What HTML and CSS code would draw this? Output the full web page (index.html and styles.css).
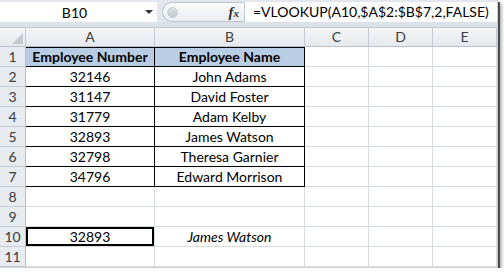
FILE: index.html
```html
<!DOCTYPE html>
<html lang="en">
<head>
  <meta charset="UTF-8">
  <title>VLOOKUP</title>
  <link rel="stylesheet" href="styles.css">
</head>
<body>
  <div class="window">
    <div class="toolbar">
      <div class="namebox">
        <span class="name">B10</span>
        <span class="arrow"></span>
      </div>
      <div class="pill">
        <span class="knob"></span>
        <span class="fx"><i>f</i><i class="x">x</i></span>
      </div>
      <div class="formula">=VLOOKUP(A10,$A$2:$B$7,2,FALSE)</div>
    </div>
    <div class="band"></div>

    <table class="sheet">
      <colgroup>
        <col style="width: 26px">
        <col style="width: 129px">
        <col style="width: 150px">
        <col style="width: 64px">
        <col style="width: 64px">
        <col style="width: 64px">
      </colgroup>
      <thead>
        <tr>
          <th class="corner"><div class="tri-box"><span class="tri"></span></div></th>
          <th>A</th>
          <th>B</th>
          <th>C</th>
          <th>D</th>
          <th>E</th>
        </tr>
      </thead>
      <tbody>
        <tr>
          <th>1</th>
          <td class="tb head">Employee Number</td>
          <td class="tb head">Employee Name</td>
          <td></td><td></td><td></td>
        </tr>
        <tr>
          <th>2</th>
          <td class="tb">32146</td>
          <td class="tb">John Adams</td>
          <td></td><td></td><td></td>
        </tr>
        <tr>
          <th>3</th>
          <td class="tb">31147</td>
          <td class="tb">David Foster</td>
          <td></td><td></td><td></td>
        </tr>
        <tr>
          <th>4</th>
          <td class="tb">31779</td>
          <td class="tb">Adam Kelby</td>
          <td></td><td></td><td></td>
        </tr>
        <tr>
          <th>5</th>
          <td class="tb">32893</td>
          <td class="tb">James Watson</td>
          <td></td><td></td><td></td>
        </tr>
        <tr>
          <th>6</th>
          <td class="tb">32798</td>
          <td class="tb">Theresa Garnier</td>
          <td></td><td></td><td></td>
        </tr>
        <tr>
          <th>7</th>
          <td class="tb">34796</td>
          <td class="tb">Edward Morrison</td>
          <td></td><td></td><td></td>
        </tr>
        <tr>
          <th>8</th>
          <td></td><td></td><td></td><td></td><td></td>
        </tr>
        <tr>
          <th>9</th>
          <td></td><td></td><td></td><td></td><td></td>
        </tr>
        <tr>
          <th>10</th>
          <td class="thick">32893</td>
          <td class="result">James Watson</td>
          <td></td><td></td><td></td>
        </tr>
        <tr>
          <th>11</th>
          <td></td><td></td><td></td><td></td><td></td>
        </tr>
      </tbody>
    </table>
  </div>
</body>
</html>
```

FILE: styles.css
```css
body {
  margin: 0;
  background: #fff;
  font-family: Lato, "Liberation Sans", sans-serif;
  font-size: 14px;
  color: #000;
}
.window {
  width: 497px;
  border-right: 1px solid #d0d0d0;
  border-bottom: 1px solid #d0d0d0;
  box-shadow: 2px 2px 0 #4b4b4b, 4px 4px 3px #b5b5b5;
  background: #fff;
}
.toolbar {
  display: flex;
  height: 20px;
  padding-top: 2px;
  background: #e3e7ed;
}
.namebox {
  display: flex;
  align-items: center;
  width: 157px;
  background: #fff;
}
.name {
  flex: 1;
  text-align: center;
  padding-left: 4px;
}
.arrow {
  width: 0;
  height: 0;
  margin-right: 4px;
  border-left: 4px solid transparent;
  border-right: 4px solid transparent;
  border-top: 4px solid #333;
}
.pill {
  display: flex;
  align-items: center;
  justify-content: space-between;
  width: 82px;
  margin-left: 5px;
  border: 1px solid #bcc5d0;
  border-right: none;
  border-radius: 10px 0 0 10px;
  background: linear-gradient(#fbfcfd, #e9edf2);
  box-sizing: border-box;
}
.knob {
  width: 9px;
  height: 9px;
  margin-left: 4px;
  border-radius: 50%;
  background: linear-gradient(#e0e3e7, #c3c8ce);
  border: 1px solid #c9ced4;
}
.fx {
  margin-right: 5px;
  font-family: "Liberation Serif", serif;
  font-weight: bold;
  font-size: 15px;
  color: #333;
}
.fx .x {
  font-size: 11px;
}
.formula {
  flex: 1;
  padding-left: 8px;
  line-height: 20px;
  background: #fff;
  border-left: 1px solid #c5cbd3;
}
.band {
  height: 5px;
  background: #dde2e8;
  border-bottom: 1px solid #c3c9d1;
}
.sheet {
  width: 497px;
  table-layout: fixed;
  border-collapse: separate;
  border-spacing: 0;
}
.sheet th,
.sheet td {
  padding: 0;
  line-height: 19px;
  text-align: center;
  white-space: nowrap;
  overflow: hidden;
  border-right: 1px solid #d9dcdf;
  border-bottom: 1px solid #d9dcdf;
}
.sheet thead th {
  line-height: 18px;
  font-weight: normal;
  color: #3c3c3c;
  background: linear-gradient(#f4f6f8, #e6e9ed);
  border-right-color: #c4cad2;
  border-bottom-color: #b9c0c9;
}
.sheet tbody th {
  font-weight: normal;
  color: #3c3c3c;
  background: #e8ebef;
  border-right-color: #b9c0c9;
  border-bottom-color: #c4cad2;
}
.corner {
  background: #e8ebef;
}
.tri-box {
  display: flex;
  justify-content: flex-end;
  align-items: flex-end;
  height: 18px;
  padding: 0 2px 2px 0;
  box-sizing: border-box;
}
.tri {
  width: 11px;
  height: 11px;
  background: #c4c9cf;
  clip-path: polygon(100% 0, 100% 100%, 0 100%);
}
.sheet td.tb {
  border-right-color: #000;
  border-bottom-color: #000;
}
.sheet td.head {
  font-weight: bold;
  background: #b8cce4;
  box-shadow: inset 0 1px 0 #000;
}
.sheet td.thick {
  box-shadow: inset 0 0 0 2px #000;
}
.sheet td.result {
  font-style: italic;
}
```
